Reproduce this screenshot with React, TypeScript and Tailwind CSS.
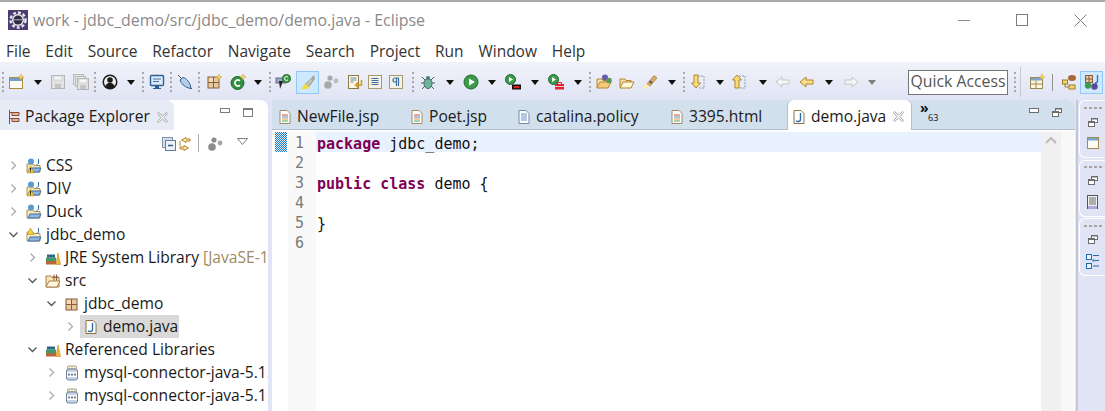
import type { ReactNode } from "react";

const uiFont = "font-['Open_Sans','Noto_Sans',sans-serif]";

type IconProps = { className?: string };

const star = "M13 0l.9 2.100L16 3l-2.100.9L13 6l-.9-2.100L10 3l2.100-.9z";

function Svg({ className = "", children }: IconProps & { children: ReactNode }) {
  return (
    <svg width={16} height={16} viewBox="0 0 16 16" fill="none" className={`shrink-0 ${className}`}>
      {children}
    </svg>
  );
}

function Grip({ className = "" }: IconProps) {
  return (
    <div className={`flex h-[26px] w-[3px] shrink-0 flex-col justify-between py-[3px] ${className}`}>
      {[0, 1, 2, 3, 4].map((i) => (
        <span key={i} className="h-[2px] w-[2px] bg-[#a8a8a8]" />
      ))}
    </div>
  );
}

function Arrow({ className = "", muted = false }: IconProps & { muted?: boolean }) {
  return (
    <svg width="8" height="5" viewBox="0 0 8 5" className={`shrink-0 ${className}`}>
      <path d="M0 0h8L4 5z" fill={muted ? "#808080" : "#111"} />
    </svg>
  );
}

function EclipseLogo() {
  return (
    <svg width="20" height="20" viewBox="0 0 20 20" className="shrink-0">
      <rect width="20" height="20" fill="#4b3d72" />
      <circle cx="10" cy="10" r="7.500" fill="none" stroke="#e8e6ee" strokeWidth="2.400" strokeDasharray="3 2" />
      <circle cx="10" cy="10" r="6" fill="#e8e6ee" />
      <circle cx="10" cy="10" r="4.500" fill="#2f2a40" />
      <path d="M5.600 9h8.800v1.400H5.600z" fill="#8d87a8" />
    </svg>
  );
}

function NewIcon({ className }: IconProps) {
  return (
    <Svg className={className}>
      <rect x="1.500" y="3.500" width="13" height="11" fill="#fdfcf2" stroke="#b08a3c" />
      <rect x="2" y="4" width="12" height="3" fill="#6f9fd0" />
      <path d={star} fill="#f4d86a" stroke="#c9a33a" strokeWidth=".5" />
    </Svg>
  );
}

function SaveIcon({ className, double }: IconProps & { double?: boolean }) {
  return (
    <Svg className={className}>
      {double && <rect x=".5" y=".5" width="10" height="10" fill="#e6e6e6" stroke="#b9b9b9" />}
      {double && <rect x="2.500" y="2.500" width="10" height="10" fill="#e6e6e6" stroke="#b9b9b9" />}
      <rect x={double ? 4.5 : 1.5} y={double ? 4.5 : 1.5} width={double ? 11 : 13} height={double ? 11 : 13} fill="#e2e2e2" stroke="#b5b5b5" />
      <rect x={double ? 6 : 4} y={double ? 5 : 2} width="8" height="4" fill="#f6f6f6" stroke="#c4c4c4" strokeWidth=".6" />
      <rect x={double ? 7 : 5} y={double ? 11 : 10} width="6" height="4" fill="#c4c4c4" />
    </Svg>
  );
}

function Tick({ className }: IconProps) {
  return (
    <Svg className={className}>
      <circle cx="8" cy="8" r="7.500" fill="#1c1c1c" />
      <circle cx="8" cy="8" r="6" fill="#eee" />
      <circle cx="8" cy="6" r="2.800" fill="#1c1c1c" />
      <path d="M3.200 13c.8-3 2.600-4.200 4.800-4.200s4 1.200 4.800 4.200c-2.800 2.200-6.800 2.200-9.600 0z" fill="#1c1c1c" />
    </Svg>
  );
}

function MonitorIcon({ className }: IconProps) {
  return (
    <Svg className={className}>
      <rect x="1.500" y="1.500" width="13" height="10" rx="1" fill="#dfeaf7" stroke="#2b5f97" strokeWidth="1.400" />
      <path d="M4 5h8M4 7.500h6" stroke="#4577ac" />
      <path d="M6 12h4v2h2v1H4v-1h2z" fill="#2b5f97" />
    </Svg>
  );
}

function PenIcon({ className }: IconProps) {
  return (
    <Svg className={className}>
      <path d="M1 1l14 14" stroke="#555" />
      <path d="M6 3.500C9 4 12 7 13.500 12L14 14.500 11.500 14C7 12.500 4 9.500 3 6z" fill="#b9cfe6" stroke="#2e6295" />
    </Svg>
  );
}

function PackageIcon({ className, plus = true }: IconProps & { plus?: boolean }) {
  return (
    <Svg className={className}>
      <rect x="2" y="3" width="11" height="11" fill="#e6c9a0" stroke="#8a5a3a" />
      <path d="M7.500 3v11M2 8.500h11" stroke="#8a5a3a" />
      <path d="M3 4h4v4H3z" fill="#f1dbb9" />
      {plus && <path d={star} fill="#f4d86a" stroke="#c9a33a" strokeWidth=".5" />}
    </Svg>
  );
}

function ClassIcon({ className }: IconProps) {
  return (
    <Svg className={className}>
      <circle cx="7.500" cy="9" r="6.500" fill="#2d8f3e" stroke="#1f6a2c" />
      <path d="M10 6.800A3 3 0 1 0 10 11.200" stroke="#fff" strokeWidth="1.600" />
      <path d={star} fill="#f4d86a" stroke="#c9a33a" strokeWidth=".5" />
    </Svg>
  );
}

function RunSearchIcon({ className }: IconProps) {
  return (
    <Svg className={className}>
      <rect x="1" y="4" width="10" height="5" fill="#9aa9bd" stroke="#5f6f86" />
      <path d="M4 7h4l-3 8z" fill="#222" />
      <circle cx="11.500" cy="4.500" r="4" fill="#3f9a4f" stroke="#1f6a2c" />
      <path d="M13 3.200A2 2 0 1 0 13 5.800" stroke="#fff" />
    </Svg>
  );
}

function HighlightIcon({ className }: IconProps) {
  return (
    <Svg className={className}>
      <path d="M5 10L14 1l1 4-6 8z" fill="#a8a69a" />
      <path d="M6 11l5-7 1 3-4 5z" fill="#c8c6ba" />
      <path d="M1 15l2-2.500L5 9.500l4 3.500-1.500 2z" fill="#f5dc3a" />
    </Svg>
  );
}

function GearsIcon({ className, dark }: IconProps & { dark?: boolean }) {
  const c = dark ? "#8c8c8c" : "#a8a8a8";
  return (
    <Svg className={className}>
      <circle cx="5" cy="11" r="3.800" fill={c} />
      <circle cx="7" cy="4" r="2.600" fill={c} />
      <circle cx="13" cy="7" r="2.400" fill={dark ? "#a4a4a4" : "#bcbcbc"} />
    </Svg>
  );
}

function NoteIcon({ className }: IconProps) {
  return (
    <Svg className={className}>
      <rect x="1.500" y="1.500" width="10" height="13" fill="#fdf8e4" stroke="#8a7a45" />
      <path d="M3.500 4h6M3.500 6h6M3.500 8h3" stroke="#6a87a8" />
      <path d="M14.500 6v5H9M11 8.500L8.500 11l2.500 2.500" stroke="#d29a22" strokeWidth="1.600" />
    </Svg>
  );
}

function DocLinesIcon({ className }: IconProps) {
  return (
    <Svg className={className}>
      <rect x="1.500" y="1.500" width="13" height="13" fill="#f4f2e6" stroke="#a89a70" />
      <path d="M4.500 4.500h7M4.500 6.500h7M4.500 8.500h7M4.500 10.500h7" stroke="#3f6f9f" />
    </Svg>
  );
}

function PilcrowIcon({ className }: IconProps) {
  return (
    <Svg className={className}>
      <rect x="1.500" y="1.500" width="13" height="13" fill="#f4f2e6" stroke="#a89a70" />
      <path d="M11 4H7a2 2 0 0 0 0 4h1.500M8.500 4v8M10.500 4v8" stroke="#3f6f9f" strokeWidth="1.200" />
    </Svg>
  );
}

function BugIcon({ className }: IconProps) {
  return (
    <Svg className={className}>
      <path d="M2 3l3 3M14 3l-3 3M1 9h3M15 9h-3M2 15l3-3M14 15l-3-3" stroke="#4f5f55" />
      <ellipse cx="8" cy="9.500" rx="4" ry="5" fill="#6fb59a" stroke="#3d6f5d" />
      <circle cx="8" cy="4" r="2" fill="#4f7f6f" />
    </Svg>
  );
}

function PlayIcon({ className }: IconProps) {
  return (
    <Svg className={className}>
      <circle cx="8" cy="8" r="7" fill="#3d9a4b" stroke="#1f6a2c" />
      <path d="M6 4.500L12 8l-6 3.500z" fill="#fff" />
    </Svg>
  );
}

function RunBadgeIcon({ className, tool }: IconProps & { tool?: boolean }) {
  return (
    <Svg className={className}>
      <circle cx="5.500" cy="5.500" r="5" fill="#3d9a4b" stroke="#1f6a2c" />
      <path d="M4 3l4 2.500L4 8z" fill="#fff" />
      {tool ? (
        <>
          <rect x="7" y="10" width="9" height="5.500" fill="#e52430" />
          <path d="M9.500 10V8.500h4V10" stroke="#e52430" />
          <path d="M7 12.500h9" stroke="#fff" strokeWidth=".7" />
        </>
      ) : (
        <>
          <rect x="7" y="10.500" width="9" height="5" fill="#111" />
          <rect x="8.500" y="12" width="6" height="2.200" fill="#e21c1c" />
        </>
      )}
    </Svg>
  );
}

function FolderIcon({ className, badge }: IconProps & { badge?: boolean }) {
  return (
    <Svg className={className}>
      <path d="M1 13.500V5h5l1 1.500h5v7z" fill="#f6e3b3" stroke="#b4842b" />
      <path d="M1 14l3-6h11l-3 6z" fill={badge ? "#f3cd7b" : "#fdf5dc"} stroke="#b4842b" />
      {badge && (
        <>
          <circle cx="9" cy="3.500" r="3" fill="#6a5aa8" />
          <circle cx="13" cy="6.500" r="2.800" fill="#5a9a58" />
        </>
      )}
    </Svg>
  );
}

function TorchIcon({ className }: IconProps) {
  return (
    <Svg className={className}>
      <path d="M5 10L12 1.500 15 4l-7 8z" fill="#d4aa6a" stroke="#a07a3c" strokeWidth=".7" />
      <path d="M7.500 7l2.500 2.200" stroke="#665a4a" strokeWidth="2" />
      <path d="M1 15c0-3 1.500-5 3.500-5.500L7 12c-1 2-3 3-6 3z" fill="#fdeeb0" />
    </Svg>
  );
}

function AnnotationIcon({ className, up }: IconProps & { up?: boolean }) {
  return (
    <Svg className={className}>
      <path d="M8 2h6v12H8" stroke="#8aa0b8" strokeDasharray="2 1" />
      <path d={up ? "M6 1L1.500 6H4v8h4V6h2.500z" : "M4 1v8H1.500L6 14l4.500-5H8V1z"} fill="#f8dc7c" stroke="#b4842b" />
    </Svg>
  );
}

function NavIcon({ className, dir, state }: IconProps & { dir: "l" | "r"; state: "on" | "off" }) {
  const fill = state === "on" ? "#f9de8c" : "#f5f5f5";
  const stroke = state === "on" ? "#b4842b" : "#c4c4c4";
  return (
    <Svg className={className}>
      <path d={dir === "l" ? "M1 8l6-5v3h7v4H7v3z" : "M15 8L9 3v3H2v4h7v3z"} fill={fill} stroke={stroke} />
    </Svg>
  );
}

function QuickPerspective({ className }: IconProps) {
  return (
    <Svg className={className}>
      <rect x="1.500" y="3.500" width="12" height="11" fill="#fdf6df" stroke="#9a8a55" />
      <rect x="2" y="4" width="11" height="2.500" fill="#7aa6d4" />
      <path d="M1.500 10h12M7 6.500v8" stroke="#9a8a55" />
      <path d={star} fill="#f4d86a" stroke="#c9a33a" strokeWidth=".5" />
    </Svg>
  );
}

function DebugPerspective({ className }: IconProps) {
  return (
    <Svg className={className}>
      <rect x="1.500" y="6" width="5" height="4" fill="#f4d77a" stroke="#9a7a25" />
      <rect x="8" y="11" width="6" height="4" fill="#f4d77a" stroke="#9a7a25" />
      <path d="M4 10v3h4" stroke="#9a7a25" />
      <ellipse cx="11" cy="4" rx="4" ry="3" fill="#a8673a" />
    </Svg>
  );
}

function JavaPerspective({ className }: IconProps) {
  return (
    <Svg className={className}>
      <rect x="1.500" y="1.500" width="7" height="7" fill="#e6c9a0" stroke="#8a5a3a" />
      <path d="M5 1.500v7M1.500 5h7" stroke="#8a5a3a" />
      <circle cx="4" cy="11.500" r="3.200" fill="#3f9a4f" />
      <circle cx="10.500" cy="12.500" r="3.200" fill="#5a4a9a" />
      <path d="M13.500 1v6c0 1.500-1 2-2.500 2" stroke="#2b6fb0" strokeWidth="1.300" />
    </Svg>
  );
}

function Restore({ className = "" }: IconProps) {
  return (
    <svg width="10" height="9" viewBox="0 0 10 9" className={`shrink-0 ${className}`} fill="none">
      <rect x="3.500" y=".5" width="6" height="4" fill="#fff" stroke="#6d6d6d" />
      <path d="M3.500 1h6" stroke="#6d6d6d" />
      <rect x=".5" y="3.500" width="6" height="5" fill="#fff" stroke="#6d6d6d" />
      <path d="M.5 4.500h6" stroke="#6d6d6d" />
    </svg>
  );
}

function CloseMark({ className = "" }: IconProps) {
  return (
    <svg width="11" height="11" viewBox="0 0 11 11" fill="none" className={`shrink-0 ${className}`}>
      <path d="M1.500.5L5.500 4l4-3.500 1 1L7 5.500l3.500 4-1 1-4-3.500-4 3.500-1-1L4 5.500.5 1.500z" fill="#fff" stroke="#8c8c8c" strokeWidth=".8" />
    </svg>
  );
}

function FileIcon({ kind }: { kind: "jsp" | "text" | "java" }) {
  return (
    <Svg>
      <path d="M3 1.500h7l3 3v10H3z" fill="#fff" stroke={kind === "java" ? "#8a7440" : kind === "text" ? "#6f8ab0" : "#a08a62"} />
      {kind === "java" ? (
        <path d="M9.500 4v6.500c0 1.500-1 2-2.500 2-.8 0-1.500-.3-2-.8" stroke="#2d6cae" strokeWidth="1.400" />
      ) : kind === "text" ? (
        <path d="M5 5h6M5 7h6M5 9h6M5 11h6" stroke="#6f8fc0" />
      ) : (
        <>
          <path d="M5 6h6" stroke="#d24a3a" />
          <path d="M5 8h6" stroke="#4a8fd2" />
          <path d="M5 10h6" stroke="#d29a3a" />
          <path d="M5 12h6" stroke="#4aa35a" />
        </>
      )}
    </Svg>
  );
}

function Chevron({ open, className = "" }: IconProps & { open?: boolean }) {
  return (
    <svg width="9" height="9" viewBox="0 0 9 9" fill="none" className={`shrink-0 ${className}`}>
      <path d={open ? "M.5 2.500l4 4 4-4" : "M2.500.5l4 4-4 4"} stroke={open ? "#555" : "#aaa"} strokeWidth="1.300" />
    </svg>
  );
}

function ProjectIcon({ warn }: { warn?: boolean }) {
  return (
    <Svg>
      <path d="M1 14V6h6l1 1.500h6V14z" fill="#f5e6b8" stroke="#a8935a" />
      <path d="M2 14l2-4h11l-2 4z" fill="#8fb6e0" stroke="#3f6fa3" />
      <circle cx="5" cy="3.500" r="3" fill="#5a9ad0" />
      {warn && (
        <>
          <path d="M4.500 8L1 15h7z" fill="#f6d23c" stroke="#9a7a15" strokeWidth=".5" />
          <path d="M4.500 10v2.500M4.500 13.200v1" stroke="#111" />
        </>
      )}
      <path d="M12.500 1v4c0 1-1 1.500-2 1.300" stroke="#2d6cae" />
    </Svg>
  );
}

function ProjectFolderIcon() {
  return (
    <Svg>
      <path d="M1 14V5h6l1 1.500h6V14z" fill="#fbeec5" stroke="#b49a5a" />
      <path d="M2 14l2-4h11l-2 4z" fill="#8fb6e0" stroke="#3f6fa3" />
      <path d="M4.500 1L1 7.500h7z" fill="#f6d23c" stroke="#9a7a15" strokeWidth=".5" />
      <path d="M12.500 1v4c0 1-1 1.500-2 1.300" stroke="#2d6cae" />
    </Svg>
  );
}

function LibraryIcon() {
  return (
    <Svg>
      <rect x="1" y="11" width="10" height="3.500" fill="#b5673c" />
      <rect x="1" y="7.500" width="10" height="3.500" fill="#3f9a6a" />
      <rect x="2" y="4.500" width="8" height="3" fill="#2d6a8a" />
      <path d="M11 14.500L13 3l2.500 11.500z" fill="#f2b63a" stroke="#c98a1a" strokeWidth=".6" />
    </Svg>
  );
}

function SrcIcon() {
  return (
    <Svg>
      <path d="M1 14V3h5l1 1.500h7V14z" fill="#f8e4b4" stroke="#a8804a" />
      <path d="M1 14l3-6h11l-3 6z" fill="#fdf5dc" stroke="#a8804a" />
      <path d="M9 1.500v6M11.500 1.500v6M7.500 4h6" stroke="#8a5a3a" />
    </Svg>
  );
}

function JarIcon() {
  return (
    <Svg>
      <rect x="3.500" y="1" width="9" height="3" rx="1" fill="#f2ecd4" stroke="#a8a084" />
      <rect x="2.500" y="4" width="11" height="11" rx="2" fill="#c4d2e4" stroke="#6f84a0" />
      <rect x="3" y="7" width="10" height="5" fill="#fff" />
      <path d="M5 8.500v2M8 8.500v2M11 8.500v2" stroke="#3c4a66" strokeWidth="1.400" />
    </Svg>
  );
}

function CollapseAll() {
  return (
    <Svg>
      <rect x="1.500" y="1.500" width="10" height="10" fill="#d4dde8" stroke="#7f93ab" />
      <rect x="4.500" y="4.500" width="10" height="10" fill="#eef2f7" stroke="#5f7f9f" />
      <path d="M7 9.500h5" stroke="#2d5f8f" strokeWidth="1.400" />
    </Svg>
  );
}

function LinkEditor() {
  return (
    <Svg>
      <path d="M9 1.500L4.500 4 9 6.500V5h4V3H9z" fill="#fbeab5" stroke="#b4842b" />
      <path d="M7 9.500L11.500 12 7 14.500V13H3v-2h4z" fill="#fbeab5" stroke="#b4842b" />
      <path d="M3 5v5" stroke="#b4842b" />
    </Svg>
  );
}

// dithered marker for the current line, 1px checks like the SWT ruler
function RulerMark() {
  return (
    <svg width="12" height="20" shapeRendering="crispEdges" className="block">
      <defs>
        <pattern id="ruler-dither" width="2" height="2" patternUnits="userSpaceOnUse">
          <rect width="2" height="2" fill="#e4eef8" />
          <rect width="1" height="1" fill="#1f76c4" />
          <rect x="1" y="1" width="1" height="1" fill="#1f76c4" />
        </pattern>
      </defs>
      <rect width="12" height="20" fill="url(#ruler-dither)" />
    </svg>
  );
}

const tree = [
  { depth: 0, label: "CSS", open: false, icon: <ProjectIcon warn /> },
  { depth: 0, label: "DIV", open: false, icon: <ProjectIcon warn /> },
  { depth: 0, label: "Duck", open: false, icon: <ProjectIcon /> },
  { depth: 0, label: "jdbc_demo", open: true, icon: <ProjectFolderIcon /> },
  { depth: 1, label: "JRE System Library", open: false, icon: <LibraryIcon />, decor: "[JavaSE-1.8]" },
  { depth: 1, label: "src", open: true, icon: <SrcIcon /> },
  { depth: 2, label: "jdbc_demo", open: true, icon: <PackageIcon plus={false} /> },
  { depth: 3, label: "demo.java", open: false, icon: <FileIcon kind="java" />, selected: true },
  { depth: 1, label: "Referenced Libraries", open: true, icon: <LibraryIcon /> },
  { depth: 2, label: "mysql-connector-java-5.1.7-bin.jar", open: false, icon: <JarIcon /> },
  { depth: 2, label: "mysql-connector-java-5.1.7-bin.jar", open: false, icon: <JarIcon /> },
];

const depthPad = ["pl-[9px]", "pl-[28px]", "pl-[47px]", "pl-[66px]"];

function TreeRow({ row }: { row: (typeof tree)[number] }) {
  return (
    <div className={`flex h-[23px] items-center whitespace-nowrap text-[15.6px] text-[#1a1a1a] ${depthPad[row.depth]}`}>
      <Chevron open={row.open} />
      <div className={`ml-[5px] flex h-[23px] items-center gap-[4px] pl-[3px] pr-[1px] ${row.selected ? "bg-[#d9d9d9]" : ""}`}>
        {row.icon}
        <span>
          {row.label}
          {row.decor && <span className="text-[#a08a60]"> {row.decor}</span>}
        </span>
      </div>
    </div>
  );
}

function EditorTab({ label, kind, w }: { label: string; kind: "jsp" | "text"; w: string }) {
  return (
    <div className={`flex h-full shrink-0 items-center gap-[4px] pl-[5px] pt-[4px] ${w}`}>
      <FileIcon kind={kind} />
      <span>{label}</span>
    </div>
  );
}

function Kw({ children }: { children: ReactNode }) {
  return <span className="font-bold text-[#7f0055]">{children}</span>;
}

function CodeLine({ children, active }: { children?: ReactNode; active?: boolean }) {
  return <div className={`h-[20px] pl-[1px] leading-[25px] ${active ? "bg-[#e8f2fe]" : ""}`}>{children}</div>;
}

function TrimGrip({ className = "" }: IconProps) {
  return (
    <div className={`flex gap-[2px] ${className}`}>
      {[0, 1, 2, 3].map((i) => (
        <span key={i} className="h-[2px] w-[3px] bg-[#aaa69e]" />
      ))}
    </div>
  );
}

export default function App() {
  return (
    <div className={`flex h-[411px] w-[1105px] flex-col overflow-hidden bg-white ${uiFont}`}>
      <div className="h-[2px] bg-[#a9a9a9]" />

      <div className="flex h-[36px] shrink-0 items-center pl-[8px]">
        <EclipseLogo />
        <span className="ml-[5px] pt-[2px] text-[15.9px] text-[#8a8a8a]">work - jdbc_demo/src/jdbc_demo/demo.java - Eclipse</span>
        <div className="ml-auto mr-[18px] flex items-center">
          <span className="h-[1px] w-[12px] bg-[#8c8c8c]" />
          <span className="ml-[46px] h-[12px] w-[12px] border border-[#7d7d7d]" />
          <svg width="13" height="13" viewBox="0 0 13 13" className="ml-[46px]">
            <path d="M.5.5l12 12M12.500.5l-12 12" stroke="#7d7d7d" />
          </svg>
        </div>
      </div>

      <nav className="flex h-[24px] shrink-0 items-center gap-[14.8px] pl-[6px] pt-[3px] text-[15.5px] text-[#333]">
        {["File", "Edit", "Source", "Refactor", "Navigate", "Search", "Project", "Run", "Window", "Help"].map((m) => (
          <span key={m}>{m}</span>
        ))}
      </nav>

      <div className="flex min-h-0 flex-1 flex-col bg-[#e0e4f4]">
        <div className="flex h-[38px] shrink-0 items-center bg-gradient-to-b from-[#f1f3fa] to-[#e0e4f4] pl-[2px] pt-[2px]">
          <Grip />
          <NewIcon className="ml-[3px]" />
          <Arrow className="ml-[10px]" />
          <SaveIcon className="ml-[8px]" />
          <SaveIcon className="ml-[7px]" double />
          <Grip className="ml-[5px]" />
          <Tick className="ml-[5px]" />
          <Arrow className="ml-[9px]" />
          <Grip className="ml-[7px]" />
          <MonitorIcon className="ml-[4px]" />
          <Grip className="ml-[5px]" />
          <PenIcon className="ml-[4px]" />
          <Grip className="ml-[5px]" />
          <PackageIcon className="ml-[5px]" />
          <ClassIcon className="ml-[8px]" />
          <Arrow className="ml-[8px]" />
          <Grip className="ml-[7px]" />
          <RunSearchIcon className="ml-[3px]" />
          <div className="ml-[5px] flex h-[23px] w-[23px] items-center justify-center border border-[#90c8f6] bg-[#cde8ff]">
            <HighlightIcon />
          </div>
          <GearsIcon className="ml-[4px]" />
          <NoteIcon className="ml-[8px]" />
          <DocLinesIcon className="ml-[4px]" />
          <PilcrowIcon className="ml-[5px]" />
          <Grip className="ml-[8px]" />
          <BugIcon className="ml-[5px]" />
          <Arrow className="ml-[10px]" />
          <PlayIcon className="ml-[9px]" />
          <Arrow className="ml-[9px]" />
          <RunBadgeIcon className="ml-[9px]" />
          <Arrow className="ml-[10px]" />
          <RunBadgeIcon className="ml-[9px]" tool />
          <Arrow className="ml-[10px]" />
          <Grip className="ml-[7px]" />
          <FolderIcon className="ml-[4px]" badge />
          <FolderIcon className="ml-[7px]" />
          <TorchIcon className="ml-[7px]" />
          <Arrow className="ml-[10px]" />
          <Grip className="ml-[7px]" />
          <AnnotationIcon className="ml-[4px]" />
          <Arrow className="ml-[10px]" />
          <AnnotationIcon className="ml-[7px]" up />
          <Arrow className="ml-[12px]" />
          <NavIcon className="ml-[8px]" dir="l" state="off" />
          <NavIcon className="ml-[8px]" dir="l" state="on" />
          <Arrow className="ml-[10px]" />
          <NavIcon className="ml-[10px]" dir="r" state="off" />
          <Arrow className="ml-[9px]" muted />
          <div className="ml-auto flex items-center">
            <div className="flex h-[25px] w-[100px] items-center justify-center border border-[#767676] bg-white text-[15.8px] text-[#555]">
              Quick Access
            </div>
            <Grip className="ml-[6px]" />
            <div className="ml-[3px] h-[30px] w-[1px] bg-[#c4c8d4]" />
            <QuickPerspective className="ml-[8px]" />
            <div className="ml-[7px] h-[17px] w-[1px] bg-[#909090]" />
            <DebugPerspective className="ml-[8px]" />
            <div className="ml-[3px] flex h-[23px] w-[23px] items-center justify-center border border-[#90c8f6] bg-[#cde8ff]">
              <JavaPerspective />
            </div>
            <div className="w-[2px]" />
          </div>
        </div>

        <div className="flex min-h-0 flex-1">
          <section className="flex w-[268px] shrink-0 flex-col overflow-hidden rounded-tr-[8px] bg-white">
            <div className="flex h-[30px] shrink-0 items-center">
              <div className="flex h-full w-[174px] items-center rounded-tr-[8px] bg-[#e6ebf6] pl-[8px] pt-[4px] text-[15.6px] text-[#1a1a1a]">
                <svg width="12" height="14" viewBox="0 0 12 14" className="shrink-0">
                  <path d="M1.500 0v14M1.500 2.500H11v3H4v-3M1.500 8.500H11v3H4v-3" stroke="#8a4a3a" fill="#e6b890" />
                </svg>
                <span className="ml-[5px] whitespace-nowrap">Package Explorer</span>
                <CloseMark className="ml-[7px]" />
              </div>
              <div className="ml-[46px] flex items-start gap-[13px] self-start pt-[8px]">
                <span className="block h-[5px] w-[10px] border border-[#7d7d7d] bg-white" />
                <span className="block h-[9px] w-[10px] border border-t-2 border-[#7d7d7d] bg-white" />
              </div>
            </div>
            <div className="flex h-[24px] shrink-0 items-end pb-[2px] pl-[161px]">
              <CollapseAll />
              <LinkEditor />
              <div className="ml-[5px] h-[18px] w-[1px] bg-[#aaa]" />
              <GearsIcon className="ml-[8px]" dark />
              <svg width="11" height="7" viewBox="0 0 11 7" className="mb-[7px] ml-[14px]">
                <path d="M.5.5h10l-5 6z" fill="#fff" stroke="#7d7d7d" />
              </svg>
            </div>
            <div className="flex flex-col">
              {tree.map((row, i) => (
                <TreeRow key={i} row={row} />
              ))}
            </div>
          </section>

          <section className="ml-[4px] flex w-[803px] shrink-0 flex-col overflow-hidden rounded-tr-[8px] bg-white">
            <div className="flex h-[30px] shrink-0 items-center border-b border-[#b4bfce] bg-[#d2e0ee] text-[15.6px] text-[#1a1a1a]">
              <EditorTab label="NewFile.jsp" kind="jsp" w="w-[132px]" />
              <EditorTab label="Poet.jsp" kind="jsp" w="w-[107px]" />
              <EditorTab label="catalina.policy" kind="text" w="w-[153px]" />
              <EditorTab label="3395.html" kind="jsp" w="w-[123px]" />
              <div className="flex h-[30px] w-[125px] shrink-0 items-center gap-[4px] rounded-tl-[6px] rounded-tr-[6px] border-x border-[#b4bfce] bg-white pl-[3px] pt-[4px]">
                <FileIcon kind="java" />
                <span>demo.java</span>
                <CloseMark className="ml-[3px]" />
              </div>
              <div className="relative ml-[8px] h-[22px] w-[24px] self-start text-[#111]">
                <span className="absolute left-0 top-[1px] text-[14px] font-bold leading-[14px]">»</span>
                <span className="absolute left-[8px] top-[12px] text-[9px] leading-[12px]">63</span>
              </div>
              <div className="ml-[85px] flex items-start gap-[13px] self-start pt-[8px]">
                <span className="block h-[5px] w-[10px] border border-[#6d6d6d] bg-white" />
                <Restore />
              </div>
            </div>
            <div className="flex min-h-0 flex-1 pt-[2px]">
              <div className="w-[16px] shrink-0 pl-[3px]">
                <RulerMark />
              </div>
              <div className="w-[28px] shrink-0 bg-[#f9f9f9] pr-[12px] text-right font-['DejaVu_Sans_Mono',monospace] text-[15px] text-[#787878]">
                {[1, 2, 3, 4, 5, 6].map((n) => (
                  <div key={n} className="h-[20px] leading-[23px]">
                    {n}
                  </div>
                ))}
              </div>
              <div className="min-w-0 flex-1 whitespace-pre font-['DejaVu_Sans_Mono',monospace] text-[15px] text-[#111]">
                <CodeLine active>
                  <Kw>package</Kw> jdbc_demo;
                </CodeLine>
                <CodeLine />
                <CodeLine>
                  <Kw>public</Kw> <Kw>class</Kw> demo {"{"}
                </CodeLine>
                <CodeLine />
                <CodeLine>{"}"}</CodeLine>
              </div>
              <div className="flex w-[20px] shrink-0 justify-center bg-[#f0f0f0] pt-[5px]">
                <svg width="12" height="7" viewBox="0 0 12 7" fill="none" className="shrink-0">
                  <path d="M1 6l5-5 5 5" stroke="#bbb" strokeWidth="2" />
                </svg>
              </div>
              <div className="mr-[1px] w-[13px] shrink-0 bg-[#f8f8f8]" />
            </div>
          </section>

          <aside className="ml-[1px] flex flex-1 flex-col border-l-2 border-[#c4c8d4] pl-[1px]">
            <div className="flex h-[58px] flex-col items-center rounded-bl-[6px] rounded-tl-[6px] border-b border-l border-t border-white">
              <TrimGrip className="mt-[6px]" />
              <Restore className="mt-[9px]" />
              <svg width="12" height="12" viewBox="0 0 12 12" className="mt-[10px] shrink-0">
                <rect x=".5" y=".5" width="11" height="11" fill="#fdfcf2" stroke="#a08a55" />
                <rect x="1" y="1" width="10" height="2.500" fill="#7aa6d4" />
              </svg>
            </div>
            <div className="mt-[2px] flex h-[57px] flex-col items-center rounded-bl-[6px] rounded-tl-[6px] border-b border-l border-t border-white">
              <TrimGrip className="mt-[5px]" />
              <Restore className="mt-[8px]" />
              <svg width="12" height="15" viewBox="0 0 12 15" className="mt-[10px] shrink-0">
                <rect x=".5" y=".5" width="10" height="13" fill="#f4f4f4" stroke="#555" />
                <path d="M2 3h7M2 5h7M2 7h7M2 9h7" stroke="#666" />
                <rect x="1" y="11" width="9" height="3" fill="#aaa8d8" />
              </svg>
            </div>
            <div className="mt-[1px] flex h-[58px] flex-col items-center rounded-bl-[6px] rounded-tl-[6px] border-b border-l border-t border-white">
              <TrimGrip className="mt-[6px]" />
              <Restore className="mt-[8px]" />
              <svg width="14" height="15" viewBox="0 0 14 15" className="mt-[10px] shrink-0">
                <rect x=".5" y=".5" width="5" height="5" fill="#eaf3fb" stroke="#1f6fb0" />
                <rect x=".5" y="9.500" width="5" height="5" fill="#eaf3fb" stroke="#1f6fb0" />
                <path d="M7 1.500h6M7 12h6M9 6.500h4" stroke="#1f6fb0" />
                <rect x="6.500" y="5.500" width="2" height="2" fill="#1f6fb0" />
              </svg>
            </div>
          </aside>
        </div>
      </div>
    </div>
  );
}
